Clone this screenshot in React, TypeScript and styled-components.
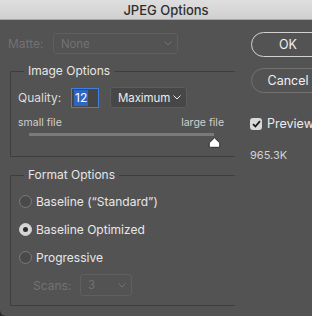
import React from 'react';
import styled, { createGlobalStyle } from 'styled-components';

const FONT = 'Inter, "Liberation Sans", Arial, sans-serif';

const GlobalStyle = createGlobalStyle`
  html, body {
    margin: 0;
    padding: 0;
    background: #2a2a2a;
  }
  body {
    font-family: ${FONT};
    -webkit-font-smoothing: antialiased;
  }
`;

const Window = styled.div`
  width: 312px;
  height: 316px;
  display: flex;
  flex-direction: column;
  background: #535353;
  overflow: hidden;
  border-bottom-left-radius: 6px;
  color: #e4e4e4;
  font-size: 12px;
`;

const TitleBar = styled.div`
  height: 20px;
  flex: none;
  display: flex;
  align-items: center;
  justify-content: center;
  box-sizing: border-box;
  padding-left: 20px;
  background: linear-gradient(#dedede, #d0d0d0);
  border-bottom: 1px solid #a8a8a8;
  color: #2e2e2e;
  font-size: 13px;
  font-weight: 500;
`;

const Body = styled.div`
  flex: 1;
  display: flex;
  gap: 16px;
`;

const LeftCol = styled.div`
  width: 235px;
  flex: none;
  padding-left: 8px;
  box-sizing: border-box;
  display: flex;
  flex-direction: column;
`;

const RightCol = styled.div`
  flex: none;
  display: flex;
  flex-direction: column;
  align-items: flex-start;
  padding-top: 12px;
`;

const Row = styled.div<{ $top?: number; $indent?: number }>`
  display: flex;
  align-items: center;
  margin-top: ${(p) => p.$top ?? 0}px;
  margin-left: ${(p) => p.$indent ?? 0}px;
`;

const Label = styled.span<{ $width: number; $disabled?: boolean }>`
  width: ${(p) => p.$width}px;
  flex: none;
  font-size: 12px;
  color: ${(p) => (p.$disabled ? '#727272' : '#dcdcdc')};
`;

const Select = styled.div<{ $width: number; $height?: number; $disabled?: boolean }>`
  width: ${(p) => p.$width}px;
  height: ${(p) => p.$height ?? 21}px;
  box-sizing: border-box;
  display: flex;
  align-items: center;
  justify-content: space-between;
  padding: 0 5px 0 7px;
  border: 1px solid ${(p) => (p.$disabled ? '#5f5f5f' : '#5c5c5c')};
  border-radius: 3px;
  background: ${(p) => (p.$disabled ? '#535353' : '#474747')};
  color: ${(p) => (p.$disabled ? '#727272' : '#ececec')};
  font-size: 11.5px;
  letter-spacing: -0.1px;
`;

const QualityInput = styled.div`
  width: 28px;
  height: 20px;
  box-sizing: border-box;
  margin-right: 11px;
  display: flex;
  align-items: center;
  padding-left: 2px;
  border: 1px solid #3f7fe0;
  background: #464646;
  font-size: 12px;
`;

const Selection = styled.span`
  background: #2d66c4;
  color: #ffffff;
  padding: 0 1px;
  line-height: 16px;
`;

const Group = styled.fieldset<{ $top: number }>`
  margin: ${(p) => p.$top}px 0 0 2px;
  padding: 9px 11px 9px 7px;
  border: 1px solid #3e3e3e;
  border-right: none;
  min-width: 0;
`;

const Legend = styled.legend`
  margin-left: 6px;
  padding: 0 4px;
  line-height: 14px;
  font-size: 12px;
  color: #e6e6e6;
`;

const SizeLabels = styled.div`
  display: flex;
  justify-content: space-between;
  margin-top: 9px;
  font-size: 10.5px;
  line-height: 12px;
  color: #d0d0d0;
`;

const Slider = styled.div`
  position: relative;
  height: 14px;
  margin: 4px 10px 0 11px;
`;

const Track = styled.div`
  height: 3px;
  background: #7a7a7a;
`;

const Thumb = styled.svg`
  position: absolute;
  right: -7px;
  top: 4px;
`;

const RadioRow = styled.div<{ $top?: number }>`
  display: flex;
  align-items: center;
  gap: 4px;
  height: 20px;
  margin-top: ${(p) => p.$top ?? 0}px;
  margin-left: 1px;
  font-size: 12px;
  color: #e8e8e8;
`;

const RadioDot = styled.span<{ $checked?: boolean }>`
  width: 13px;
  height: 13px;
  box-sizing: border-box;
  flex: none;
  border-radius: 50%;
  border: 1px solid ${(p) => (p.$checked ? '#cfcfcf' : '#7a7a7a')};
  background: ${(p) => (p.$checked ? '#d6d6d6' : '#4a4a4a')};
  display: flex;
  align-items: center;
  justify-content: center;

  &::after {
    content: '';
    width: 5px;
    height: 5px;
    border-radius: 50%;
    background: ${(p) => (p.$checked ? '#2c2c2c' : 'transparent')};
  }
`;

const Button = styled.div<{ $default?: boolean; $top?: number }>`
  width: 74px;
  height: 25px;
  box-sizing: border-box;
  margin-top: ${(p) => p.$top ?? 0}px;
  display: flex;
  align-items: center;
  justify-content: center;
  border-radius: 13px;
  border: ${(p) => (p.$default ? '1.5px solid #d2d2d2' : '1px solid #727272')};
  color: #f0f0f0;
  font-size: 12.5px;
`;

const CheckRow = styled.div`
  display: flex;
  align-items: center;
  gap: 5px;
  margin-top: 23px;
  margin-left: -1px;
  font-size: 12.5px;
  color: #ececec;
`;

const CheckBox = styled.span`
  width: 12px;
  height: 12px;
  flex: none;
  border-radius: 3px;
  background: #d9d9d9;
  display: flex;
  align-items: center;
  justify-content: center;
`;

const FileSize = styled.div`
  margin-top: 18px;
  margin-left: -1px;
  font-size: 11px;
  line-height: 12px;
  color: #d2d2d2;
`;

const Chevron = () => (
  <svg width="8" height="5" viewBox="0 0 8 5">
    <polyline points="0.5,0.5 4,4 7.5,0.5" fill="none" stroke="currentColor" strokeWidth="1" />
  </svg>
);

export default function App() {
  return (
    <Window>
      <GlobalStyle />
      <TitleBar>JPEG Options</TitleBar>
      <Body>
        <LeftCol>
          <Row $top={13}>
            <Label $width={45} $disabled>Matte:</Label>
            <Select $width={125} $disabled>
              None
              <Chevron />
            </Select>
          </Row>

          <Group $top={10}>
            <Legend>Image Options</Legend>
            <Row>
              <Label $width={53}>Quality:</Label>
              <QualityInput>
                <Selection>12</Selection>
              </QualityInput>
              <Select $width={77}>
                Maximum
                <Chevron />
              </Select>
            </Row>
            <SizeLabels>
              <span>small file</span>
              <span>large file</span>
            </SizeLabels>
            <Slider>
              <Track />
              <Thumb width="13" height="11" viewBox="0 0 13 11">
                <path d="M6.5 0.8 L11.8 6 L11.8 9 Q11.8 10.3 10.5 10.3 L2.5 10.3 Q1.2 10.3 1.2 9 L1.2 6 Z" fill="#ffffff" stroke="#2b2b2b" strokeWidth="1" />
              </Thumb>
            </Slider>
          </Group>

          <Group $top={11}>
            <Legend>Format Options</Legend>
            <RadioRow>
              <RadioDot />
              Baseline (“Standard”)
            </RadioRow>
            <RadioRow $top={8}>
              <RadioDot $checked />
              Baseline Optimized
            </RadioRow>
            <RadioRow $top={8}>
              <RadioDot />
              Progressive
            </RadioRow>
            <Row $top={7} $indent={15}>
              <Label $width={47} $disabled>Scans:</Label>
              <Select $width={52} $height={22} $disabled>
                3
                <Chevron />
              </Select>
            </Row>
          </Group>
        </LeftCol>

        <RightCol>
          <Button $default>OK</Button>
          <Button $top={11}>Cancel</Button>
          <CheckRow>
            <CheckBox>
              <svg width="9" height="8" viewBox="0 0 9 8">
                <polyline points="1,4.2 3.4,6.5 8,1.2" fill="none" stroke="#1c1c1c" strokeWidth="1.8" />
              </svg>
            </CheckBox>
            Preview
          </CheckRow>
          <FileSize>965.3K</FileSize>
        </RightCol>
      </Body>
    </Window>
  );
}
